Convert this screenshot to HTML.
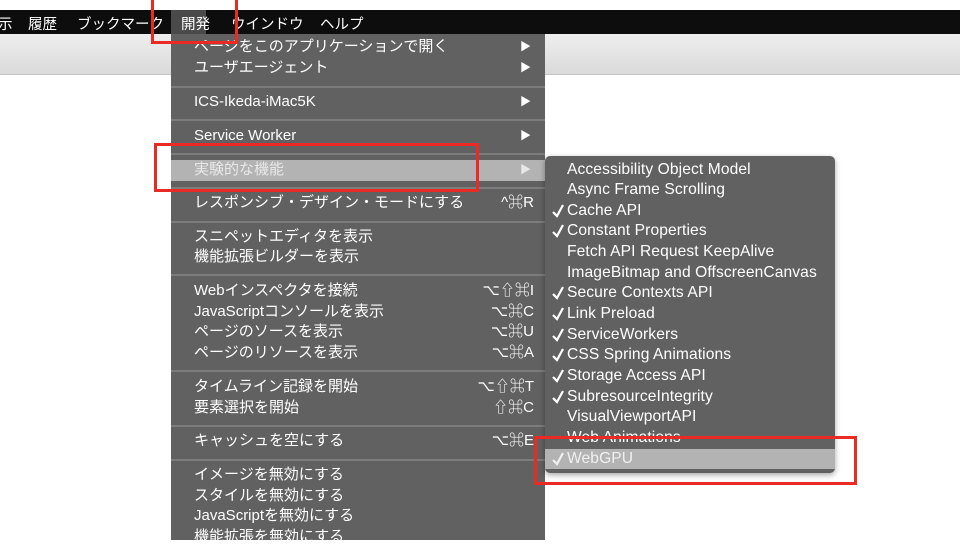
<!DOCTYPE html>
<html><head><meta charset="utf-8"><style>
*{margin:0;padding:0;box-sizing:border-box}
body{width:960px;height:540px;overflow:hidden;background:#fff;position:relative;font-family:"Liberation Sans","Noto Sans CJK JP",sans-serif;color:#fff;font-size:15px}
.bar{position:absolute;left:0;top:10px;width:960px;height:24px;background:#0d0d0d}
.bar span{position:absolute;top:3px;font-size:14.5px}
.tool{position:absolute;left:0;top:34px;width:960px;height:41px;background:linear-gradient(#eeeeee,#dadada);border-bottom:1px solid #c4c4c4}
.menu{position:absolute;left:171px;top:34px;width:374px;height:506px;background:#616161}
.sub{position:absolute;left:545px;top:156px;width:290px;height:317px;background:#616161;border-radius:5px;box-shadow:0 2px 6px rgba(0,0,0,.35)}
.t{position:absolute;white-space:nowrap;line-height:20px}
.s{font-size:15.6px;letter-spacing:0.1px}
.sep{position:absolute;left:0;width:374px;height:2px;background:#7c7c7c}
.hl{position:absolute;background:#b3b3b3}
.red{position:absolute;border:3px solid #ea2a24}
.ar{position:absolute;font-size:11px;line-height:20px}
.ck{position:absolute;left:551px;width:14px;height:20px}
</style></head><body>
<div class="bar">
<span style="left:-2px">示</span><span style="left:28px">履歴</span><span style="left:77px">ブックマーク</span>
<span style="left:171px;top:0;height:24px;width:35px;background:#4a4a4a"></span>
<span style="left:181px">開発</span><span style="left:231px">ウインドウ</span><span style="left:320px">ヘルプ</span>
</div>
<div class="tool"></div>
<div class="menu">
<div class="hl" style="left:0;top:126px;width:374px;height:21px"></div>
<div class="sep" style="top:52px"></div><div class="sep" style="top:85px"></div><div class="sep" style="top:119px"></div><div class="sep" style="top:153px"></div><div class="sep" style="top:187px"></div><div class="sep" style="top:240px"></div><div class="sep" style="top:336px"></div><div class="sep" style="top:391px"></div><div class="sep" style="top:425px"></div>
</div>
<div class="sub">
<div class="hl" style="left:0;top:293px;width:290px;height:20px"></div>
</div>
<div class="t" style="left:194px;top:37px">ページをこのアプリケーションで開く</div>
<div class="t" style="left:194px;top:58px">ユーザエージェント</div>
<div class="t" style="left:194px;top:92px">ICS-Ikeda-iMac5K</div>
<div class="t" style="left:194px;top:126px">Service Worker</div>
<div class="t" style="left:194px;top:160px;color:#e8e8e8">実験的な機能</div>
<div class="t" style="left:194px;top:193px">レスポンシブ・デザイン・モードにする</div>
<div class="t" style="left:194px;top:227px">スニペットエディタを表示</div>
<div class="t" style="left:194px;top:247px">機能拡張ビルダーを表示</div>
<div class="t" style="left:194px;top:281px">Webインスペクタを接続</div>
<div class="t" style="left:194px;top:302px">JavaScriptコンソールを表示</div>
<div class="t" style="left:194px;top:322px">ページのソースを表示</div>
<div class="t" style="left:194px;top:343px">ページのリソースを表示</div>
<div class="t" style="left:194px;top:377px">タイムライン記録を開始</div>
<div class="t" style="left:194px;top:398px">要素選択を開始</div>
<div class="t" style="left:194px;top:431px">キャッシュを空にする</div>
<div class="t" style="left:194px;top:465px">イメージを無効にする</div>
<div class="t" style="left:194px;top:486px">スタイルを無効にする</div>
<div class="t" style="left:194px;top:506px">JavaScriptを無効にする</div>
<div class="t" style="left:194px;top:527px">機能拡張を無効にする</div>
<div class="ar" style="left:520px;top:37px">▶</div><div class="ar" style="left:520px;top:58px">▶</div><div class="ar" style="left:520px;top:92px">▶</div><div class="ar" style="left:520px;top:126px">▶</div><div class="ar" style="left:520px;top:160px;color:#e8e8e8">▶</div>
<div class="t" style="right:426px;top:193px">^⌘R</div>
<div class="t" style="right:426px;top:281px">⌥⇧⌘I</div>
<div class="t" style="right:426px;top:302px">⌥⌘C</div>
<div class="t" style="right:426px;top:322px">⌥⌘U</div>
<div class="t" style="right:426px;top:343px">⌥⌘A</div>
<div class="t" style="right:426px;top:377px">⌥⇧⌘T</div>
<div class="t" style="right:426px;top:398px">⇧⌘C</div>
<div class="t" style="right:426px;top:431px">⌥⌘E</div>
<div class="t s" style="left:567px;top:160px">Accessibility Object Model</div>
<div class="t s" style="left:567px;top:180px">Async Frame Scrolling</div>
<div class="t s" style="left:567px;top:201px">Cache API</div>
<div class="t s" style="left:567px;top:221px">Constant Properties</div>
<div class="t s" style="left:567px;top:242px">Fetch API Request KeepAlive</div>
<div class="t s" style="left:567px;top:263px">ImageBitmap and OffscreenCanvas</div>
<div class="t s" style="left:567px;top:283px">Secure Contexts API</div>
<div class="t s" style="left:567px;top:304px">Link Preload</div>
<div class="t s" style="left:567px;top:325px">ServiceWorkers</div>
<div class="t s" style="left:567px;top:345px">CSS Spring Animations</div>
<div class="t s" style="left:567px;top:366px">Storage Access API</div>
<div class="t s" style="left:567px;top:387px">SubresourceIntegrity</div>
<div class="t s" style="left:567px;top:407px">VisualViewportAPI</div>
<div class="t s" style="left:567px;top:428px">Web Animations</div>
<div class="t s" style="left:567px;top:449px;color:#f0f0f0">WebGPU</div>
<svg class="ck" style="top:201px" viewBox="0 0 14 20"><path d="M2 11l4 4L12 4" fill="none" stroke="#fff" stroke-width="2.2"/></svg>
<svg class="ck" style="top:221px" viewBox="0 0 14 20"><path d="M2 11l4 4L12 4" fill="none" stroke="#fff" stroke-width="2.2"/></svg>
<svg class="ck" style="top:283px" viewBox="0 0 14 20"><path d="M2 11l4 4L12 4" fill="none" stroke="#fff" stroke-width="2.2"/></svg>
<svg class="ck" style="top:304px" viewBox="0 0 14 20"><path d="M2 11l4 4L12 4" fill="none" stroke="#fff" stroke-width="2.2"/></svg>
<svg class="ck" style="top:325px" viewBox="0 0 14 20"><path d="M2 11l4 4L12 4" fill="none" stroke="#fff" stroke-width="2.2"/></svg>
<svg class="ck" style="top:345px" viewBox="0 0 14 20"><path d="M2 11l4 4L12 4" fill="none" stroke="#fff" stroke-width="2.2"/></svg>
<svg class="ck" style="top:366px" viewBox="0 0 14 20"><path d="M2 11l4 4L12 4" fill="none" stroke="#fff" stroke-width="2.2"/></svg>
<svg class="ck" style="top:387px" viewBox="0 0 14 20"><path d="M2 11l4 4L12 4" fill="none" stroke="#fff" stroke-width="2.2"/></svg>
<svg class="ck" style="top:449px" viewBox="0 0 14 20"><path d="M2 11l4 4L12 4" fill="none" stroke="#f0f0f0" stroke-width="2.2"/></svg>
<div class="red" style="left:151px;top:-3px;width:87px;height:47px"></div>
<div class="red" style="left:154px;top:143px;width:325px;height:49px"></div>
<div class="red" style="left:534px;top:436px;width:323px;height:49px"></div>
</body></html>
